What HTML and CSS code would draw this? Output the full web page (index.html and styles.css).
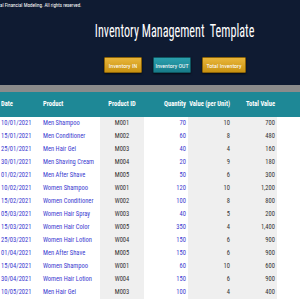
FILE: index.html
```html
<!DOCTYPE html>
<html>
<head>
<meta charset="utf-8">
<link rel="stylesheet" href="styles.css">
</head>
<body>
<div class="page">
  <header class="banner">
    <p class="copy">al Financial Modeling. All rights reserved.</p>
    <h1 class="title"><span class="title-text">Inventory Management&nbsp; Template</span></h1>
    <div class="buttons">
      <span class="btn gold">Inventory IN</span>
      <span class="btn teal">Inventory OUT</span>
      <span class="btn gold wide">Total Inventory</span>
    </div>
  </header>
  <div class="stripe"></div>
  <div class="table">
    <div class="row head">
      <span class="c date">Date</span>
      <span class="c prod">Product</span>
      <span class="c pid">Product ID</span>
      <span class="c num qty">Quantity</span>
      <span class="c num vpu">Value (per Unit)</span>
      <span class="c num tot">Total Value</span>
      <span class="c rest"></span>
    </div>
    <div class="row"><span class="c date">10/01/2021</span><span class="c prod">Men Shampoo</span><span class="c pid">M001</span><span class="c num qty">70</span><span class="c num vpu">10</span><span class="c num tot">700</span><span class="c rest"></span></div>
    <div class="row"><span class="c date">15/01/2021</span><span class="c prod">Men Conditioner</span><span class="c pid">M002</span><span class="c num qty">60</span><span class="c num vpu">8</span><span class="c num tot">480</span><span class="c rest"></span></div>
    <div class="row"><span class="c date">25/01/2021</span><span class="c prod">Men Hair Gel</span><span class="c pid">M003</span><span class="c num qty">40</span><span class="c num vpu">4</span><span class="c num tot">160</span><span class="c rest"></span></div>
    <div class="row"><span class="c date">30/01/2021</span><span class="c prod">Men Shaving Cream</span><span class="c pid">M004</span><span class="c num qty">20</span><span class="c num vpu">9</span><span class="c num tot">180</span><span class="c rest"></span></div>
    <div class="row"><span class="c date">01/02/2021</span><span class="c prod">Men After Shave</span><span class="c pid">M005</span><span class="c num qty">50</span><span class="c num vpu">6</span><span class="c num tot">300</span><span class="c rest"></span></div>
    <div class="row"><span class="c date">10/02/2021</span><span class="c prod">Women Shampoo</span><span class="c pid">W001</span><span class="c num qty">120</span><span class="c num vpu">10</span><span class="c num tot">1,200</span><span class="c rest"></span></div>
    <div class="row"><span class="c date">15/02/2021</span><span class="c prod">Women Conditioner</span><span class="c pid">W002</span><span class="c num qty">100</span><span class="c num vpu">8</span><span class="c num tot">800</span><span class="c rest"></span></div>
    <div class="row"><span class="c date">05/03/2021</span><span class="c prod">Women Hair Spray</span><span class="c pid">W003</span><span class="c num qty">40</span><span class="c num vpu">5</span><span class="c num tot">200</span><span class="c rest"></span></div>
    <div class="row"><span class="c date">15/03/2021</span><span class="c prod">Women Hair Color</span><span class="c pid">W005</span><span class="c num qty">350</span><span class="c num vpu">4</span><span class="c num tot">1,400</span><span class="c rest"></span></div>
    <div class="row"><span class="c date">25/03/2021</span><span class="c prod">Women Hair Lotion</span><span class="c pid">W004</span><span class="c num qty">150</span><span class="c num vpu">6</span><span class="c num tot">900</span><span class="c rest"></span></div>
    <div class="row"><span class="c date">01/04/2021</span><span class="c prod">Men After Shave</span><span class="c pid">M005</span><span class="c num qty">150</span><span class="c num vpu">6</span><span class="c num tot">900</span><span class="c rest"></span></div>
    <div class="row"><span class="c date">15/04/2021</span><span class="c prod">Women Shampoo</span><span class="c pid">W001</span><span class="c num qty">60</span><span class="c num vpu">10</span><span class="c num tot">600</span><span class="c rest"></span></div>
    <div class="row"><span class="c date">30/04/2021</span><span class="c prod">Women Hair Lotion</span><span class="c pid">W004</span><span class="c num qty">150</span><span class="c num vpu">6</span><span class="c num tot">900</span><span class="c rest"></span></div>
    <div class="row"><span class="c date">10/05/2021</span><span class="c prod">Men Hair Gel</span><span class="c pid">M003</span><span class="c num qty">100</span><span class="c num vpu">4</span><span class="c num tot">400</span><span class="c rest"></span></div>
  </div>
</div>
</body>
</html>
```
FILE: styles.css
```css
html, body {
  margin: 0;
  padding: 0;
  background: #ffffff;
}
.page {
  width: 300px;
  height: 300px;
  overflow: hidden;
  font-family: "Liberation Sans Narrow", "Roboto Condensed", "DejaVu Sans Condensed", Roboto, sans-serif;
}
.banner {
  height: 85px;
  background: #0f1b32;
  box-sizing: border-box;
  padding-top: 2px;
  color: #ffffff;
}
.copy {
  margin: 0;
  font-size: 5px;
  line-height: 7px;
  white-space: nowrap;
}
.title {
  margin: 12px 0 0 50px;
  font-size: 19px;
  line-height: 20px;
  font-weight: normal;
  text-align: center;
  white-space: nowrap;
  overflow: visible;
}
.title-text {
  display: inline-block;
  transform: scaleX(0.64);
  transform-origin: center;
}
.buttons {
  margin: 16px 0 0 50px;
  display: flex;
  justify-content: center;
  gap: 11px;
}
.btn {
  width: 38px;
  height: 16px;
  box-sizing: border-box;
  display: flex;
  align-items: center;
  justify-content: center;
  font-size: 6px;
  color: #ffffff;
  white-space: nowrap;
  border-radius: 1px;
  box-shadow: 0 1px 2px rgba(0,0,0,0.6);
}
.btn.wide { width: 44px; }
.gold {
  background: linear-gradient(#e9b63a, #c99312);
  border: 1px solid #8a6208;
}
.teal {
  background: linear-gradient(#2aa0ae, #187c8a);
  border: 1px solid #0f5660;
}
.stripe {
  height: 7px;
  background: #8b8b8b;
}
.table {
  display: flex;
  flex-direction: column;
}
.row {
  display: grid;
  grid-template-columns: 42px 58px 44px 44px 44px 45px 1fr;
  height: 13px;
  font-size: 6.5px;
  line-height: 13px;
  color: #3a3ad0;
}
.row.head {
  height: 25px;
  line-height: 25px;
  background: #1e8896;
  color: #ffffff;
  font-weight: bold;
}
.c {
  white-space: nowrap;
  overflow: hidden;
}
.date { padding-left: 1px; }
.prod { padding-left: 1px; }
.pid { text-align: center; color: #333333; }
.num { text-align: right; padding-right: 2px; }
.qty { color: #3a3ad0; }
.vpu, .tot { color: #333333; }
.row:not(.head) .pid,
.row:not(.head) .vpu,
.row:not(.head) .tot { background: #efefef; }
.row.head .c { color: #ffffff; }
```
